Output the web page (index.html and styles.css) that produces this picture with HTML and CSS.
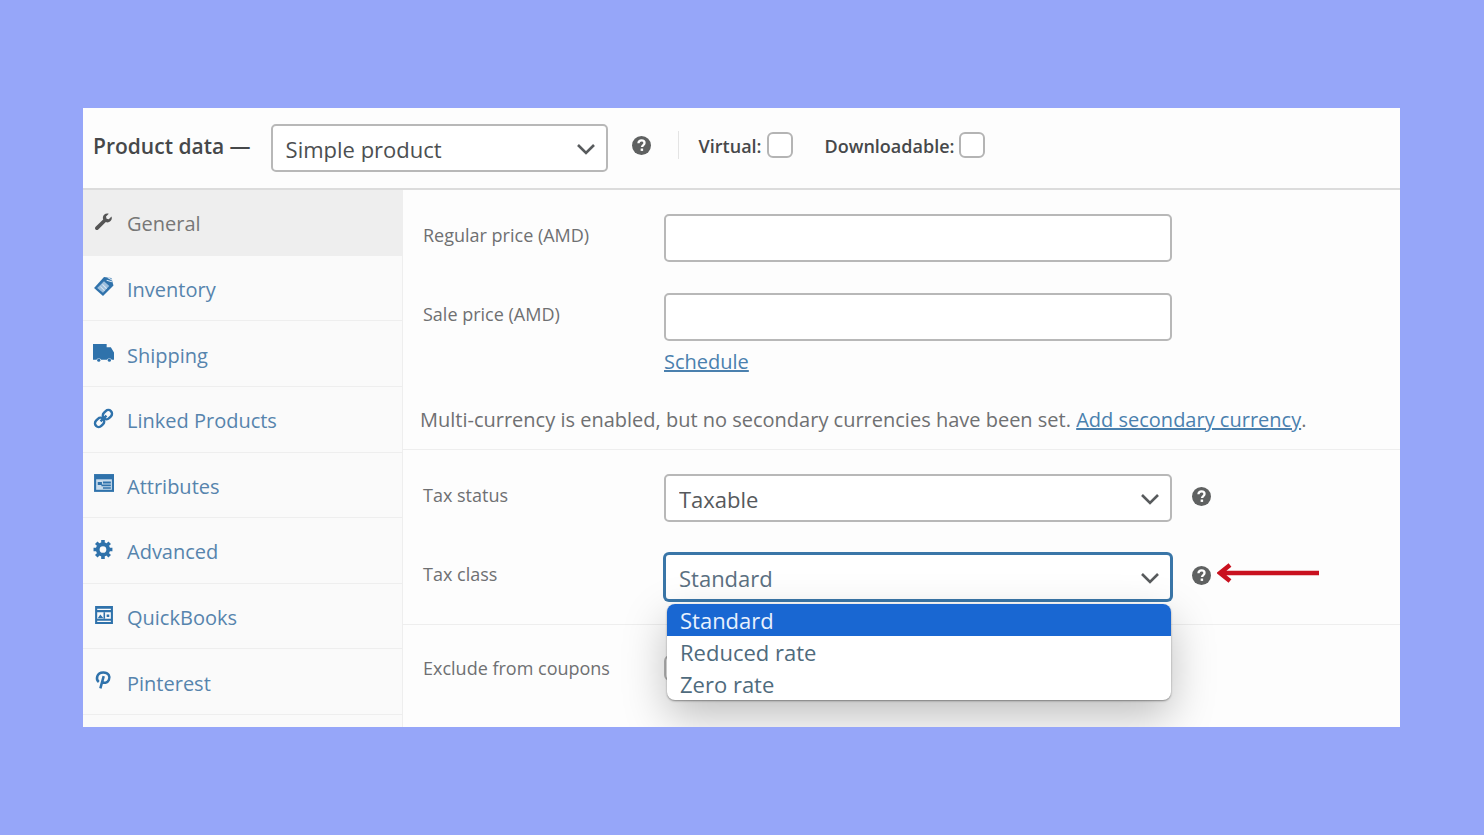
FILE: index.html
```html
<!DOCTYPE html>
<html lang="en">
<head>
    <meta charset="UTF-8">
    <meta name="viewport" content="width=device-width, initial-scale=1.0">
    <title>Product data</title>
    <link rel="stylesheet" href="styles.css">
</head>
<body>

<!-- shared icons -->
<svg class="sprite" aria-hidden="true">
    <symbol id="help" viewBox="0 0 20 20">
        <circle cx="10" cy="10" r="10" fill="#5f6161"/>
        <path d="M6.8 7.6C6.8 5.6 8.2 4.7 10 4.7s3.2 1 3.2 2.7c0 2.1-2.7 2.1-2.7 4.3" fill="none" stroke="#fff" stroke-width="2.4"/>
        <rect x="9.1" y="13.2" width="2.6" height="2.5" fill="#fff"/>
    </symbol>
    <symbol id="chevron" viewBox="0 0 20 20">
        <path d="M2 6l8 8 8-8" fill="none" stroke="#585b5d" stroke-width="2.6"/>
    </symbol>
</svg>

<div class="panel">
    <div class="header">
        <label class="title" for="product-type">Product data —</label>
        <div class="select-wrap type">
            <select id="product-type"><option>Simple product</option></select>
            <svg class="chevron"><use href="#chevron"/></svg>
        </div>
        <svg class="help"><use href="#help"/></svg>
        <div class="checks">
            <label class="check"><span>Virtual:</span> <input type="checkbox"></label>
            <label class="check"><span>Downloadable:</span> <input type="checkbox"></label>
        </div>
    </div>

    <div class="body">
        <ul class="tabs">
            <li class="active"><a href="#general">
                <svg class="icon" viewBox="0 0 20 20"><path d="M16.7 9.6c-1.2 1.3-3 1.6-4.5.9L5 17.6c-.8.8-1.9.8-2.6.1-.7-.7-.7-1.8.1-2.6L9.7 8c-.6-1.5-.3-3.3.9-4.5C11.8 2.3 13.6 2 15 2.6l-2.6 2.6.5 2.1 2.1.5 2.6-2.6c.7 1.5.3 3.2-.9 4.4z"/></svg>
                General</a></li>
            <li><a href="#inventory">
                <svg class="icon" viewBox="0 0 20 20"><path d="M1 11.5L10.5 1l7 1 2 7L9.5 19z"/><path d="M4 11.5L10.5 5l5 4.5L9.5 16z" fill="#9dbfdd"/><path d="M13 4l5 1.5M14 1.5l4.5 2.5M7 10l4 4M9 8l4 4" stroke="#d9e7f3" fill="none"/></svg>
                Inventory</a></li>
            <li><a href="#shipping">
                <svg class="icon" viewBox="0 0 20 20"><path d="M0 2h13v3h4l3 5v7h-2.2a2.3 2.3 0 0 0-4.4 0H7.7a2.3 2.3 0 0 0-4.4 0H0z"/><circle cx="5.5" cy="17.3" r="1.5"/><circle cx="15.6" cy="17.3" r="1.5"/></svg>
                Shipping</a></li>
            <li><a href="#linked">
                <svg class="icon" viewBox="0 0 20 20"><g fill="none" stroke="currentColor" stroke-width="2.3" transform="rotate(-45 10 10)"><rect x="0" y="6.5" width="9.5" height="7" rx="3.5"/><rect x="10.5" y="6.5" width="9.5" height="7" rx="3.5"/><path d="M6 10h8"/></g></svg>
                Linked Products</a></li>
            <li><a href="#attributes">
                <svg class="icon" viewBox="0 0 20 20"><path d="M1 1h19v17H1z"/><path d="M3 6h15v10H3z" fill="#c9dcec"/><path d="M4.5 8.5h4v3h-4zM9.5 8H17v2H9.5zM8 11h9v1.5H8zM9.5 13.5H17V15H9.5z"/></svg>
                Attributes</a></li>
            <li><a href="#advanced">
                <svg class="icon" viewBox="0 0 20 20"><circle cx="9.5" cy="10" r="5" fill="none" stroke="currentColor" stroke-width="3.6"/><path d="M9.5 1v3M9.5 16v3M.5 10h3M15.5 10h3M3.1 3.6l2.2 2.2M13.7 14.2l2.2 2.2M3.1 16.4l2.2-2.2M13.7 5.8l2.2-2.2" stroke="currentColor" stroke-width="3.4"/></svg>
                Advanced</a></li>
            <li><a href="#quickbooks">
                <svg class="icon" viewBox="0 0 20 20"><path fill-rule="evenodd" d="M2 1h17v17H2zM4 3.5v1.2h13V3.5zM4 7v6h13V7zM4 15v1.2h13V15z"/><path d="M4.5 12.5L7 9l3 3.5zM10 7h1.5v6H10zM13 9h2.5v2.5H13z"/></svg>
                QuickBooks</a></li>
            <li><a href="#pinterest">
                <svg class="icon" viewBox="0 0 20 20"><path d="M5.5 11.5C2.5 9 3.3 2.5 9.7 2.3c5.3-.1 6.9 4 5.4 7.3-1.4 3.1-5 3.3-6 1.4M10.2 5.8L7 17.5" fill="none" stroke="currentColor" stroke-width="2.4"/></svg>
                Pinterest</a></li>
        </ul>

        <div class="content">
            <div class="group">
                <div class="field">
                    <label for="regular">Regular price (AMD)</label>
                    <input type="text" id="regular">
                </div>
                <div class="field">
                    <label for="sale">Sale price (AMD)</label>
                    <div>
                        <input type="text" id="sale">
                        <a class="schedule" href="#schedule">Schedule</a>
                    </div>
                </div>
                <p class="note">Multi-currency is enabled, but no secondary currencies have been set. <a href="#currency">Add secondary currency</a>.</p>
            </div>

            <div class="group">
                <div class="field">
                    <label for="tax-status">Tax status</label>
                    <div class="select-wrap">
                        <select id="tax-status"><option>Taxable</option></select>
                        <svg class="chevron"><use href="#chevron"/></svg>
                    </div>
                    <svg class="help"><use href="#help"/></svg>
                </div>
                <div class="field">
                    <label for="tax-class">Tax class</label>
                    <div class="select-wrap open">
                        <select id="tax-class">
                            <option>Standard</option>
                            <option>Reduced rate</option>
                            <option>Zero rate</option>
                        </select>
                        <svg class="chevron"><use href="#chevron"/></svg>
                        <ul class="menu" role="listbox" aria-label="Tax class">
                            <li class="selected" role="option" aria-selected="true">Standard</li>
                            <li role="option">Reduced rate</li>
                            <li role="option">Zero rate</li>
                        </ul>
                    </div>
                    <svg class="help"><use href="#help"/></svg>
                    <svg class="arrow" viewBox="0 0 102 20"><path d="M102 10H3M13 2L3 10l10 8" fill="none" stroke="#c9111f" stroke-width="4.5"/></svg>
                </div>
            </div>

            <div class="group">
                <div class="field">
                    <label for="exclude">Exclude from coupons</label>
                    <input type="checkbox" id="exclude">
                </div>
            </div>
        </div>
    </div>
</div>

</body>
</html>
```
FILE: styles.css
```css
* {
    box-sizing: border-box;
}
body {
    margin: 0;
    padding: 108px 84px 108px 83px;
    background: #96a6f9;
    font-family: "Open Sans", "Noto Sans", sans-serif;
    font-size: 20px;
    line-height: 26px;
    color: #6f7072;
}
a {
    color: #4a80ae;
}
.sprite {
    display: none;
}
.panel {
    background: #fdfdfd;
    overflow: hidden;
}

/* header */
.header {
    display: flex;
    align-items: center;
    height: 82px;
    padding: 0 10px;
    border-bottom: 2px solid #dcdcdc;
    color: #46484a;
}
.title {
    font-size: 21px;
    font-weight: 600;
    padding-bottom: 4px;
    margin-right: 20px;
    white-space: nowrap;
}
.checks {
    display: flex;
    gap: 32px;
    margin: 0 0 6px 27px;
    padding-left: 20px;
    border-left: 1px solid #e4e4e4;
}
.check {
    display: flex;
    align-items: center;
    gap: 5px;
    font-weight: 600;
    font-size: 18px;
}
.check span {
    padding-top: 2px;
}
input[type="checkbox"] {
    appearance: none;
    width: 26px;
    height: 26px;
    margin: 0;
    border: 2px solid #b4b4b4;
    border-radius: 6px;
    background: #fff;
}
.help {
    width: 19px;
    height: 19px;
}
.header .help {
    margin: 0 0 6px 24px;
}

/* form controls */
input[type="text"],
select {
    display: block;
    width: 100%;
    height: 48px;
    padding: 2px 13px 0;
    border: 2px solid #b8b8b8;
    border-radius: 5px;
    background: #fff;
    font: inherit;
    font-size: 22px;
    color: #56595c;
}
select {
    appearance: none;
}
.select-wrap {
    position: relative;
}
.type {
    width: 337px;
}
.type select {
    font-weight: 500;
    color: #4c4f51;
}
.chevron {
    position: absolute;
    top: 15px;
    right: 12px;
    width: 20px;
    height: 20px;
    pointer-events: none;
}
.open select {
    border-color: #3a76a8;
    box-shadow: 0 0 0 1px #3a76a8;
    color: #5b7082;
}
.menu {
    position: absolute;
    z-index: 1;
    top: 51px;
    left: 3px;
    right: 1px;
    margin: 0;
    padding: 0;
    list-style: none;
    overflow: hidden;
    border-radius: 8px;
    background: #fff;
    box-shadow: 0 1px 2px rgba(0, 0, 0, 0.4), 0 16px 44px rgba(0, 0, 0, 0.25);
    font-size: 22px;
    line-height: 32px;
    color: #4f6b7d;
}
.menu li {
    padding: 0 13px;
}
.menu .selected {
    background: #1967d2;
    color: #e8f1fd;
}

/* tabs on the left */
.body {
    display: flex;
}
.tabs {
    display: grid;
    grid-template-rows: repeat(8, 1fr);
    flex: none;
    width: 320px;
    margin: 0;
    padding: 0 0 12px;
    list-style: none;
    background: #fafafa;
    border-right: 1px solid #eee;
}
.tabs li {
    border-bottom: 1px solid #eee;
}
.tabs a {
    display: flex;
    align-items: center;
    gap: 13px;
    height: 100%;
    padding: 4px 10px 0;
    color: #5684ad;
    text-decoration: none;
}
.tabs .active {
    background: #eee;
}
.tabs .active a {
    color: #777;
}
.icon {
    width: 21px;
    height: 21px;
    margin-bottom: 6px;
    fill: currentColor;
    color: #2f72ab;
}
.active .icon {
    color: #555;
}

/* fields */
.content {
    flex: 1;
    min-width: 0;
}
.group {
    display: flex;
    flex-direction: column;
    gap: 31px;
    padding: 24px 20px 23px;
    border-bottom: 1px solid #eee;
}
.group:last-child {
    padding-top: 22px;
    padding-bottom: 46px;
    border-bottom: 0;
}
.field {
    display: grid;
    grid-template-columns: 221px minmax(0, 508px) auto auto;
    column-gap: 20px;
    justify-content: start;
}
.field > label {
    padding-top: 8px;
    font-size: 18px;
    white-space: nowrap;
}
.field > input[type="checkbox"] {
    margin-top: 8px;
}
.field .help {
    margin-top: 13px;
}
.schedule {
    display: inline-block;
    margin-top: 8px;
}
.note {
    margin: 1px -3px -7px;
}
.arrow {
    width: 102px;
    height: 20px;
    margin: 10px 0 0 -14px;
}
```
